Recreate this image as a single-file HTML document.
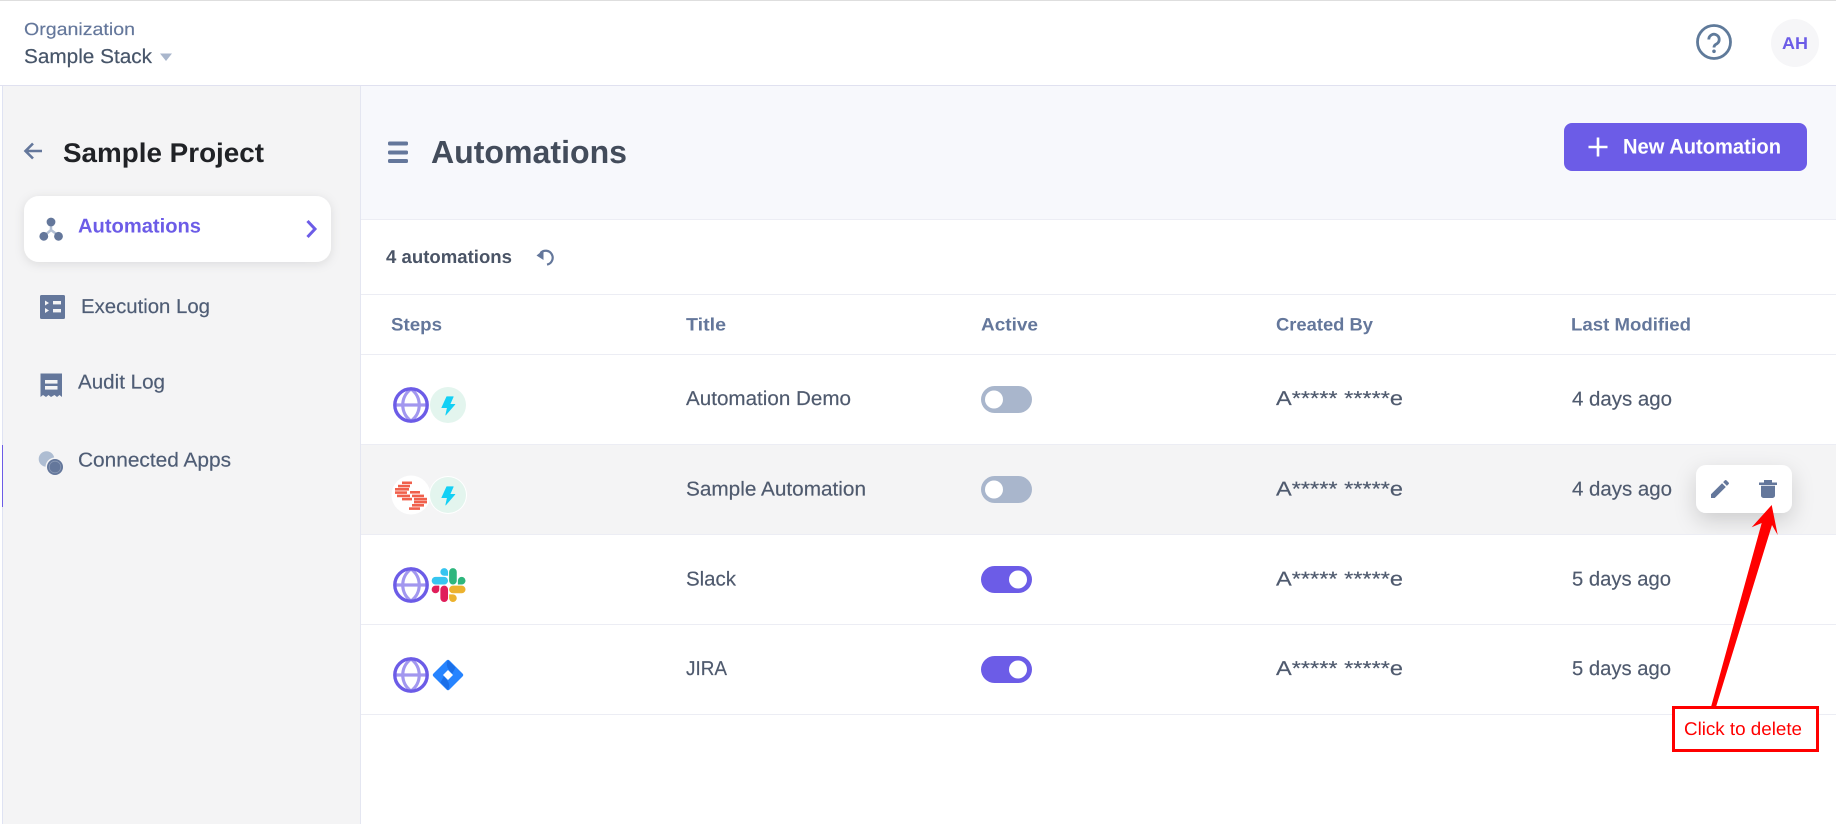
<!DOCTYPE html>
<html lang="en">
<head>
<meta charset="utf-8">
<title>Automations</title>
<style>
html,body{margin:0;padding:0;width:1836px;height:824px;overflow:hidden;background:#fff}
svg{display:block}
text{font-family:"Liberation Sans",sans-serif;text-rendering:geometricPrecision}
.row{font-size:20px;fill:#4f5a6e;stroke:#4f5a6e;stroke-width:.18px}
.hd{font-size:18px;font-weight:700;fill:#64779b}
.nav{font-size:20px;fill:#4f5d75;stroke:#4f5d75;stroke-width:.18px}
</style>
</head>
<body>
<svg xmlns="http://www.w3.org/2000/svg" width="1836" height="824" viewBox="0 0 1836 824">
<defs>
<filter id="cardS" x="-20%" y="-40%" width="140%" height="200%"><feDropShadow dx="0" dy="2" stdDeviation="5" flood-color="#000" flood-opacity=".1"/></filter>
<filter id="popS" x="-60%" y="-80%" width="220%" height="300%"><feDropShadow dx="0" dy="8" stdDeviation="11" flood-color="#000" flood-opacity=".16"/></filter>
<clipPath id="row2clip"><rect x="1600" y="445" width="236" height="89"/></clipPath>
<g id="globe" fill="none">
<path d="M0-16C-11-8-11 8 0 16C11 8 11-8 0-16Z" stroke="#a297ef" stroke-width="3.2"/>
<path d="M-16 0H16" stroke="#a297ef" stroke-width="3.2"/>
<circle r="16.200" stroke="#6c5ce7" stroke-width="3.400"/>
</g>
<g id="bolt">
<circle r="18" fill="#e3f5ee"/>
<path d="M-1.300-8.300H5.300L2-.7H7L-2.300 10-.7 2.700H-6.300Z" fill="#12d0f5" stroke="#12d0f5" stroke-width=".6" stroke-linejoin="round"/>
</g>
</defs>

<rect width="1836" height="824" fill="#fff"/>
<rect width="1836" height="1" fill="#dedede"/>

<!-- top bar -->
<text x="24" y="35" font-size="17.500" fill="#64779b" stroke="#64779b" stroke-width=".15" textLength="111" lengthAdjust="spacingAndGlyphs">Organization</text>
<text x="24" y="63" font-size="20" fill="#475569" stroke="#475569" stroke-width=".2" textLength="128" lengthAdjust="spacingAndGlyphs">Sample Stack</text>
<path d="M160 53.500h12l-6 7.500z" fill="#a9b6cc"/>
<circle cx="1714" cy="42" r="16.500" fill="none" stroke="#5f7a9a" stroke-width="2.800"/>
<path d="M1708.800 39.500A5.200 5.200 0 1 1 1717 43.700Q1714 45 1714 47.500" fill="none" stroke="#5f7a9a" stroke-width="2.800"/>
<circle cx="1714" cy="51.300" r="1.800" fill="#5f7a9a"/>
<circle cx="1795" cy="43" r="24" fill="#f6f6f8"/>
<text x="1782" y="49" font-size="17" font-weight="700" fill="#6c5ce7" textLength="26" lengthAdjust="spacingAndGlyphs">AH</text>
<rect y="85" width="1836" height="1" fill="#e0e1f0"/>

<!-- sidebar -->
<rect x="2" y="86" width="358" height="738" fill="#f4f4f5"/>
<rect x="2" y="86" width="1" height="738" fill="#dfe3f3"/>
<rect x="2" y="445" width="1" height="62" fill="#6c5ce7"/>
<rect x="360" y="86" width="1" height="738" fill="#e4e6f1"/>

<path d="M42 151H26M33 143.500 25.500 151 33 158.500" fill="none" stroke="#64779b" stroke-width="2.600"/>
<text x="63" y="162" font-size="27" font-weight="700" fill="#202226" textLength="201" lengthAdjust="spacingAndGlyphs">Sample Project</text>

<rect x="24" y="196" width="307" height="66" rx="15" fill="#fff" filter="url(#cardS)"/>
<path d="M51 222V230M51 230 44 236M51 230 59 236" stroke="#b3c0d4" stroke-width="2.500" fill="none"/>
<circle cx="51" cy="222" r="4.400" fill="#64779b"/>
<circle cx="43.800" cy="236.300" r="4.400" fill="#64779b"/>
<circle cx="58.500" cy="236.300" r="4.400" fill="#64779b"/>
<text x="78" y="232.500" font-size="20" font-weight="700" fill="#6c5ce7" textLength="123" lengthAdjust="spacingAndGlyphs">Automations</text>
<path d="M307.500 221 315 229 307.500 237" fill="none" stroke="#6c5ce7" stroke-width="3"/>

<rect x="40" y="295" width="25" height="24" rx="1.500" fill="#64779b"/>
<rect x="53" y="301" width="8" height="3.400" fill="#f4f4f5"/>
<rect x="53" y="309" width="8" height="3.400" fill="#f4f4f5"/>
<path d="M45 300.500 49 303 45 305.500ZM45 308 49 310.500 45 313Z" fill="#f4f4f5"/>
<text x="81" y="313" class="nav" textLength="129" lengthAdjust="spacingAndGlyphs">Execution Log</text>

<path d="M40.500 373.500H62V397L59.500 395 57 397 54.500 395 51 397 48.500 395 46 397 43 395 40.500 397Z" fill="#64779b"/>
<rect x="45" y="380" width="12.500" height="3.600" fill="#f4f4f5"/>
<rect x="45" y="386" width="12.500" height="3.600" fill="#f4f4f5"/>
<text x="78" y="388.500" class="nav" textLength="87" lengthAdjust="spacingAndGlyphs">Audit Log</text>

<circle cx="46.500" cy="459" r="7.800" fill="#aebdd2"/>
<circle cx="55" cy="467" r="9.500" fill="#f4f4f5"/>
<circle cx="55" cy="467" r="8" fill="#64779b"/>
<circle cx="55" cy="467" r="5.800" fill="none" stroke="#8b9ab5" stroke-width=".8"/>
<text x="78" y="466.500" class="nav" textLength="153" lengthAdjust="spacingAndGlyphs">Connected Apps</text>

<!-- header band -->
<rect x="361" y="86" width="1475" height="133" fill="#f7f8fc"/>
<rect x="361" y="219" width="1475" height="1" fill="#ecedf4"/>
<rect x="388" y="141.500" width="20" height="4" rx="1.500" fill="#64779b"/>
<rect x="388" y="150.500" width="20" height="4" rx="1.500" fill="#64779b"/>
<rect x="388" y="159" width="20" height="4" rx="1.500" fill="#64779b"/>
<text x="431" y="163" font-size="32" font-weight="700" fill="#434c5b" textLength="196" lengthAdjust="spacingAndGlyphs">Automations</text>

<rect x="1564" y="123" width="243" height="48" rx="8" fill="#6c5ce7"/>
<path d="M1598 137.500V156.500M1588.500 147H1607.500" stroke="#fff" stroke-width="2.600"/>
<text x="1623" y="153.500" font-size="21" font-weight="700" fill="#fff" textLength="158" lengthAdjust="spacingAndGlyphs">New Automation</text>

<!-- count row -->
<text x="386" y="263" font-size="18.500" font-weight="700" fill="#4a5466" textLength="126" lengthAdjust="spacingAndGlyphs">4 automations</text>
<path d="M540.500 253A7 7 0 1 1 547 264.600" fill="none" stroke="#64779b" stroke-width="2.200"/>
<path d="M536.500 255.500 543.500 250V260Z" fill="#64779b"/>
<rect x="361" y="294" width="1475" height="1" fill="#ecedf4"/>

<!-- table head -->
<text x="391" y="330.500" class="hd" textLength="51" lengthAdjust="spacingAndGlyphs">Steps</text>
<text x="686" y="330.500" class="hd" textLength="40" lengthAdjust="spacingAndGlyphs">Title</text>
<text x="981" y="330.500" class="hd" textLength="57" lengthAdjust="spacingAndGlyphs">Active</text>
<text x="1276" y="330.500" class="hd" textLength="97" lengthAdjust="spacingAndGlyphs">Created By</text>
<text x="1571" y="330.500" class="hd" textLength="120" lengthAdjust="spacingAndGlyphs">Last Modified</text>
<rect x="361" y="354" width="1475" height="1" fill="#ecedf4"/>

<!-- rows bg -->
<rect x="361" y="445" width="1475" height="89" fill="#f4f4f5"/>
<rect x="361" y="444" width="1475" height="1" fill="#ecedf4"/>
<rect x="361" y="534" width="1475" height="1" fill="#ecedf4"/>
<rect x="361" y="624" width="1475" height="1" fill="#ecedf4"/>
<rect x="361" y="714" width="1475" height="1" fill="#ecedf4"/>

<!-- row 1 -->
<use href="#globe" x="411" y="405"/>
<use href="#bolt" x="448" y="405"/>
<text x="686" y="405" class="row" textLength="165" lengthAdjust="spacingAndGlyphs">Automation Demo</text>
<rect x="981" y="386" width="51" height="27" rx="13.500" fill="#a9b6cc"/>
<circle cx="994" cy="399.500" r="9" fill="#fff"/>
<text x="1276" y="405" class="row" textLength="127" lengthAdjust="spacingAndGlyphs">A***** *****e</text>
<text x="1572" y="405.500" class="row" textLength="100" lengthAdjust="spacingAndGlyphs">4 days ago</text>

<!-- row 2 -->
<circle cx="411" cy="495" r="19.500" fill="#fff"/>
<g fill="#f0604c">
<rect x="402" y="481.500" width="10" height="2.600"/>
<rect x="398" y="484.800" width="12" height="2.600"/>
<rect x="395" y="488" width="14" height="2.600"/>
<rect x="395" y="491.300" width="12" height="2.600"/>
<rect x="397" y="494.600" width="13" height="2.600"/>
<rect x="402" y="497.800" width="10" height="2.600"/>
<rect x="410" y="491" width="10" height="2.600"/>
<rect x="412" y="494.600" width="12" height="2.600"/>
<rect x="414" y="497.800" width="13" height="2.600"/>
<rect x="414" y="500.800" width="13" height="2.600"/>
<rect x="412" y="504" width="12" height="2.600"/>
<rect x="409" y="507.300" width="11" height="2.600"/>
</g>
<circle cx="448" cy="495" r="19" fill="#fff"/>
<use href="#bolt" x="448" y="495"/>
<text x="686" y="495.500" class="row" textLength="180" lengthAdjust="spacingAndGlyphs">Sample Automation</text>
<rect x="981" y="476" width="51" height="27" rx="13.500" fill="#a9b6cc"/>
<circle cx="994" cy="489.500" r="9" fill="#fff"/>
<text x="1276" y="495.500" class="row" textLength="127" lengthAdjust="spacingAndGlyphs">A***** *****e</text>
<text x="1572" y="495.500" class="row" textLength="100" lengthAdjust="spacingAndGlyphs">4 days ago</text>

<!-- row 3 -->
<use href="#globe" x="411" y="585"/>
<g transform="translate(432 568.500) scale(.27)" stroke-width="2.500">
<path d="M25.800 77.600c0 7.100-5.800 12.900-12.900 12.900S0 84.700 0 77.600s5.800-12.900 12.900-12.900h12.900v12.900z" fill="#E01E5A" stroke="#E01E5A"/>
<path d="M32.300 77.600c0-7.100 5.800-12.900 12.900-12.900s12.900 5.800 12.900 12.900v32.300c0 7.100-5.800 12.900-12.900 12.900s-12.900-5.800-12.900-12.900V77.600z" fill="#E01E5A" stroke="#E01E5A"/>
<path d="M45.200 25.800c-7.100 0-12.900-5.800-12.900-12.900S38.100 0 45.200 0s12.900 5.800 12.900 12.900v12.900H45.200z" fill="#36C5F0" stroke="#36C5F0"/>
<path d="M45.200 32.300c7.100 0 12.900 5.800 12.900 12.900s-5.800 12.900-12.900 12.900H12.900C5.800 58.100 0 52.300 0 45.200s5.800-12.900 12.900-12.900h32.300z" fill="#36C5F0" stroke="#36C5F0"/>
<path d="M97 45.200c0-7.100 5.800-12.900 12.900-12.900s12.900 5.800 12.900 12.900-5.800 12.900-12.900 12.900H97V45.200z" fill="#2EB67D" stroke="#2EB67D"/>
<path d="M90.500 45.200c0 7.100-5.800 12.900-12.900 12.900s-12.900-5.800-12.900-12.900V12.900C64.700 5.800 70.500 0 77.600 0s12.900 5.800 12.900 12.900v32.300z" fill="#2EB67D" stroke="#2EB67D"/>
<path d="M77.600 97c7.100 0 12.900 5.800 12.900 12.900s-5.800 12.900-12.900 12.900-12.900-5.800-12.900-12.900V97h12.900z" fill="#ECB22E" stroke="#ECB22E"/>
<path d="M77.600 90.500c-7.100 0-12.900-5.800-12.900-12.900s5.800-12.900 12.900-12.900h32.300c7.100 0 12.900 5.800 12.900 12.900s-5.800 12.900-12.900 12.900H77.600z" fill="#ECB22E" stroke="#ECB22E"/>
</g>
<text x="686" y="585.500" class="row" textLength="50" lengthAdjust="spacingAndGlyphs">Slack</text>
<rect x="981" y="566" width="51" height="27" rx="13.500" fill="#6c5ce7"/>
<circle cx="1018" cy="579.500" r="9" fill="#fff"/>
<text x="1276" y="585.500" class="row" textLength="127" lengthAdjust="spacingAndGlyphs">A***** *****e</text>
<text x="1572" y="585.500" class="row" textLength="99" lengthAdjust="spacingAndGlyphs">5 days ago</text>

<!-- row 4 -->
<use href="#globe" x="411" y="675"/>
<path d="M446.500 660.500Q448 659 449.500 660.500L462.500 673.500Q464 675 462.500 676.500L449.500 689.500Q448 691 446.500 689.500L433.500 676.500Q432 675 433.500 673.500Z" fill="#2684ff"/>
<path d="M448 660Q445 665 449 670L452 674 455.500 667.500Z" fill="#1a6fe8"/>
<path d="M448 690Q451 685 447 680L444 676 440.500 682.500Z" fill="#1a6fe8"/>
<path d="M448 670 453 675 448 680 443 675Z" fill="#fff"/>
<text x="686" y="675" class="row" textLength="41" lengthAdjust="spacingAndGlyphs">JIRA</text>
<rect x="981" y="656" width="51" height="27" rx="13.500" fill="#6c5ce7"/>
<circle cx="1018" cy="669.500" r="9" fill="#fff"/>
<text x="1276" y="675" class="row" textLength="127" lengthAdjust="spacingAndGlyphs">A***** *****e</text>
<text x="1572" y="675" class="row" textLength="99" lengthAdjust="spacingAndGlyphs">5 days ago</text>

<!-- action popover -->
<g clip-path="url(#row2clip)"><rect x="1696" y="465" width="96" height="48" rx="10" fill="#fff" filter="url(#popS)"/></g>
<g transform="translate(1708 477)"><path d="M3 17.250V21h3.750L17.810 9.940l-3.750-3.750L3 17.250zM20.710 7.040a1 1 0 0 0 0-1.410l-2.340-2.340a1 1 0 0 0-1.410 0l-1.830 1.830 3.750 3.750 1.830-1.830z" fill="#64779b"/></g>
<path d="M1764 482.500V480H1772V482.500H1777V485H1759V482.500ZM1761 485.800H1775V495.500A2.500 2.500 0 0 1 1772.500 498H1763.500A2.500 2.500 0 0 1 1761 495.500Z" fill="#64779b"/>

<!-- annotation -->
<path d="M1771.700 505 1777.700 535 1772 525 1716 707 1711 707 1761.700 523 1751.700 527.300Z" fill="#ff0000"/>
<rect x="1673.500" y="707.500" width="144" height="43" fill="#fff" stroke="#ff0000" stroke-width="3"/>
<text x="1684" y="735" font-size="18.500" fill="#ff0000" textLength="118" lengthAdjust="spacingAndGlyphs">Click to delete</text>
</svg>
</body>
</html>
